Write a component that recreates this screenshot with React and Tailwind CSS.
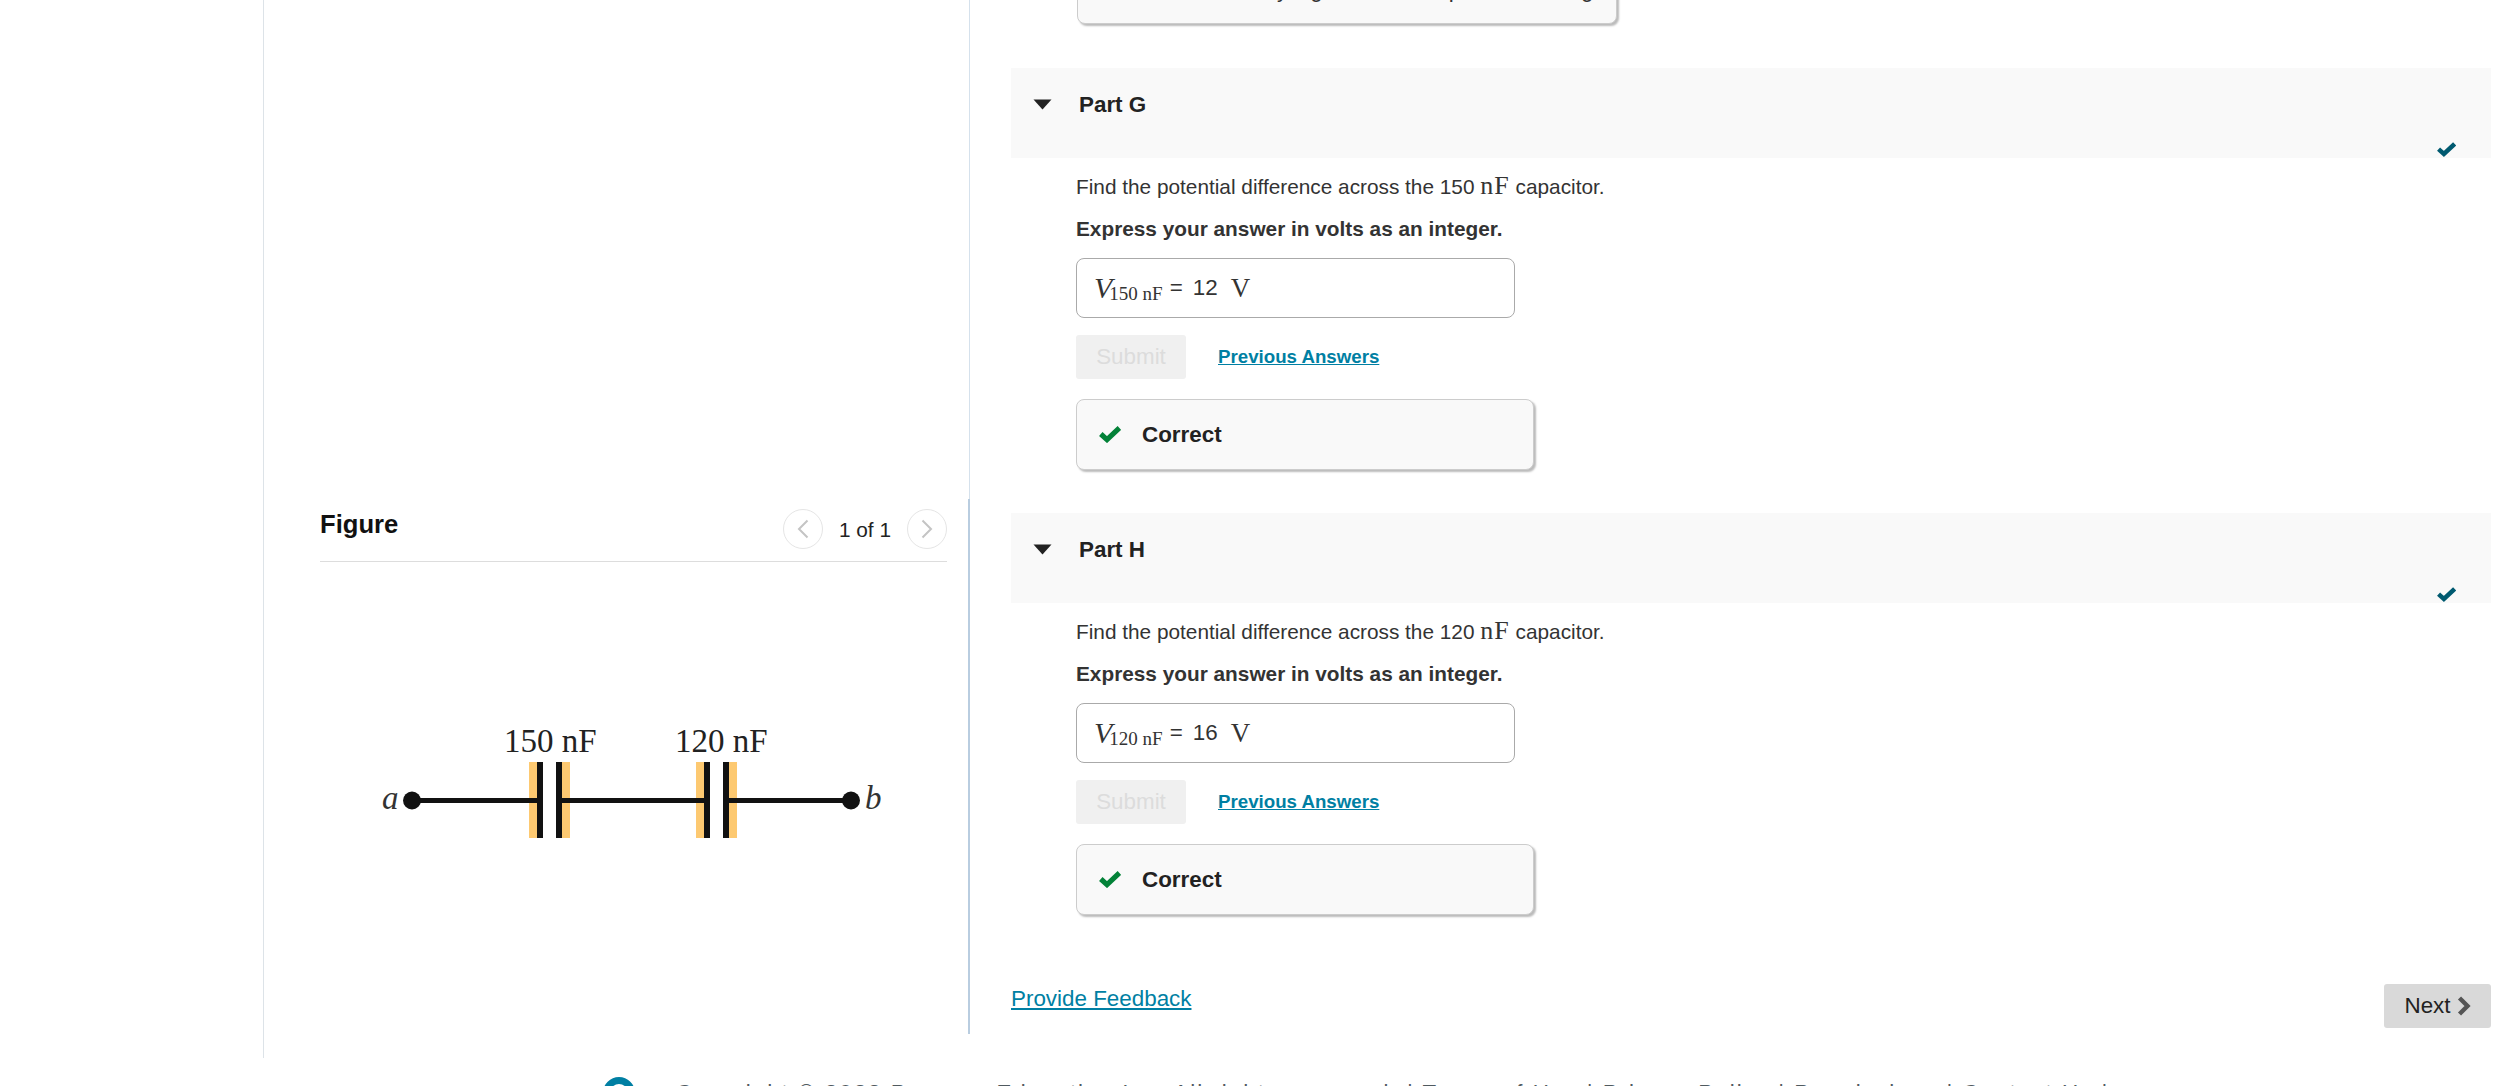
function Check({ className }) {
  return (
    <svg viewBox="0 0 22 17" className={className} fill="none" stroke="currentColor" strokeWidth="5.2" strokeLinecap="butt" strokeLinejoin="miter">
      <path d="M1.8 8 L8 13.6 L20.4 2" />
    </svg>
  );
}

function Triangle() {
  return (
    <svg viewBox="0 0 19 11" className="h-[11px] w-[19px] text-[#222]" fill="currentColor">
      <path d="M0.5 0.5 H18.5 L9.5 10.5 Z" />
    </svg>
  );
}

function Cap({ x }) {
  return (
    <g>
      <rect x={x} y="42" width="14" height="76" fill="#fdc971" />
      <rect x={x + 27} y="42" width="14" height="76" fill="#fdc971" />
      <rect x={x + 8} y="42" width="6" height="76" fill="#111" />
      <rect x={x + 27} y="42" width="6" height="76" fill="#111" />
    </g>
  );
}

function Figure() {
  return (
    <svg viewBox="0 0 530 130" className="ml-[50px] mt-[158px] h-[130px] w-[530px]" style={{ fontFamily: '"Liberation Serif", serif' }}>
      <text x="134" y="32" fontSize="33" fill="#222">150 nF</text>
      <text x="305" y="32" fontSize="33" fill="#222">120 nF</text>
      <text x="12" y="89" fontSize="33" fontStyle="italic" fill="#333">a</text>
      <text x="495" y="89" fontSize="33" fontStyle="italic" fill="#333">b</text>
      <Cap x={159} />
      <Cap x={326} />
      <rect x="42" y="78" width="131" height="5" fill="#111" />
      <rect x="192" y="78" width="148" height="5" fill="#111" />
      <rect x="359" y="78" width="122" height="5" fill="#111" />
      <circle cx="42" cy="80.5" r="9" fill="#111" />
      <circle cx="481" cy="80.5" r="9" fill="#111" />
    </svg>
  );
}

function Part({ letter, cap, value }) {
  return (
    <section>
      <div className="relative flex h-[90px] items-start bg-[#f9f9f9] pl-[22px] pt-[21px]">
        <div className="flex h-[30px] items-center">
          <Triangle />
          <span className="ml-[27px] mt-[2px] text-[22.4px] font-bold leading-[30px] text-[#222]">Part {letter}</span>
        </div>
        <Check className="absolute right-[35px] top-[74px] h-[15px] w-[19px] text-[#005a70]" />
      </div>
      <div className="pl-[65px]">
        <p className="mt-[14px] h-[30px] text-[20.8px] leading-[30px] text-[#333]">
          Find the potential difference across the {cap} <span className="font-['Liberation_Serif',serif] text-[26px] leading-none tracking-[1px]">nF</span> capacitor.
        </p>
        <p className="mt-[12px] text-[20.8px] font-bold leading-[30px] text-[#333]">Express your answer in volts as an integer.</p>
        <div className="mt-[14px] flex h-[60px] w-[439px] items-center rounded-lg border border-[#aaaaaa] bg-white pl-[17px] text-[#333]">
          <span className="font-['Liberation_Serif',serif] text-[30px] italic leading-none">V</span>
          <span className="-ml-[3px] mt-[10px] font-['Liberation_Serif',serif] text-[19px] leading-none">{cap} nF</span>
          <span className="ml-[7px] text-[22.4px]">=</span>
          <span className="ml-[10px] text-[22.4px]">{value}</span>
          <span className="ml-[13px] font-['Liberation_Serif',serif] text-[27px] leading-none">V</span>
        </div>
        <div className="mt-[17px] flex items-center">
          <span className="flex h-[44px] w-[110px] items-center justify-center rounded-[3px] bg-[#f0f0f0] text-[22.4px] text-[#dcdcdc]">Submit</span>
          <a className="ml-[32px] text-[18.7px] font-bold leading-[26px] text-[#007fa3] underline">Previous Answers</a>
        </div>
        <div className="mt-[20px] flex h-[71px] w-[458px] items-center rounded-lg border border-[#cccccc] bg-[#f9f9f9] pl-[22px] shadow-[2px_2px_2px_#bbbbbb]">
          <Check className="h-[17px] w-[22px] text-[#038238]" />
          <span className="ml-[21px] text-[22.4px] font-bold text-[#222]">Correct</span>
        </div>
      </div>
    </section>
  );
}

export default function App() {
  return (
    <div className="h-[1086px] w-[2500px] overflow-hidden bg-white font-['Liberation_Sans',Arial,sans-serif]">
      <div className="flex h-[1058px] pl-[263px]">
        <aside className="w-[707px] border-l border-[#dde3e8]">
          <div className="h-[499px] border-r border-[#d5e1ec]" />
          <div className="h-[535px] border-r-2 border-[#b9cde0] pl-[56px] pr-[21px]">
            <div className="flex h-[63px] items-start justify-between border-b border-[#dddddd] pt-[10px]">
              <h2 className="text-[25.6px] font-bold leading-[30px] text-[#111]">Figure</h2>
              <div className="flex items-center">
                <span className="flex h-[40px] w-[40px] items-center justify-center rounded-full border border-[#e5e5e5]">
                  <svg viewBox="0 0 12 20" className="h-[20px] w-[12px]" fill="none" stroke="#c4c4c4" strokeWidth="2"><path d="M10.5 1.5 L2 10 L10.5 18.5" /></svg>
                </span>
                <span className="mx-[16px] mt-[2px] text-[20.8px] text-[#222]">1 of 1</span>
                <span className="flex h-[40px] w-[40px] items-center justify-center rounded-full border border-[#e5e5e5]">
                  <svg viewBox="0 0 12 20" className="h-[20px] w-[12px]" fill="none" stroke="#c4c4c4" strokeWidth="2"><path d="M1.5 1.5 L10 10 L1.5 18.5" /></svg>
                </span>
              </div>
            </div>
            <Figure />
          </div>
        </aside>
        <main className="min-w-0 flex-1 pl-[41px] pr-[9px]">
          <div className="-mt-[46px] ml-[66px] flex h-[70px] w-[540px] items-start overflow-hidden rounded-lg border border-[#cccccc] bg-[#f9f9f9] text-[22.4px] leading-[30px] text-[#333] shadow-[2px_2px_2px_#bbbbbb]">
            <span className="ml-[199px] mt-[20px]">y</span>
            <span className="ml-[22px] mt-[20px]">g</span>
            <span className="ml-[126px] mt-[20px]">p</span>
            <span className="ml-[120px] mt-[20px]">g</span>
          </div>
          <div className="mt-[44px]">
            <Part letter="G" cap="150" value="12" />
          </div>
          <div className="mt-[43px]">
            <Part letter="H" cap="120" value="16" />
          </div>
          <div className="mt-[69px] flex items-start justify-between">
            <a className="text-[22.4px] leading-[30px] text-[#007fa3] underline">Provide Feedback</a>
            <button className="flex h-[44px] w-[107px] items-center justify-center rounded-[3px] bg-[#d9d9d9] text-[22.4px] text-[#222]">
              Next
              <svg viewBox="0 0 14 20" className="ml-[6px] h-[20px] w-[14px]" fill="none" stroke="#555555" strokeWidth="4.4"><path d="M2.5 2 L10.5 10 L2.5 18" /></svg>
            </button>
          </div>
        </main>
      </div>
      <footer className="flex items-start pl-[603px] pt-[19px] text-[22.4px] leading-[30px] text-[#505a5f]">
        <span className="h-[32px] w-[32px] shrink-0 rounded-full border-[7px] border-[#007fa3]" />
        <span className="ml-[41px] mt-[1px] whitespace-nowrap tracking-[2px]">Copyright © 2023 Pearson Education Inc. All rights reserved. | Terms of Use | Privacy Policy | Permissions | Contact Us |</span>
      </footer>
    </div>
  );
}
